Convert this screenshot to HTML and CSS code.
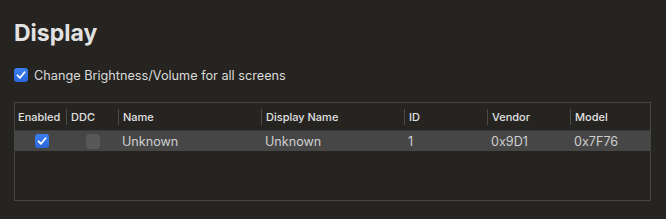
FILE: index.html
```html
<!DOCTYPE html>
<html lang="en">
<head>
    <meta charset="UTF-8">
    <title>Display</title>
    <link rel="stylesheet" href="styles.css">
</head>
<body>
    <div class="pane">
        <h1 class="title">Display</h1>

        <label class="option">
            <span class="check on">
                <svg viewBox="0 0 14 14"><path d="M3.5 7.3 L6 9.8 L10.6 4.2" /></svg>
            </span>
            Change Brightness/Volume for all screens
        </label>

        <div class="table-box">
            <div class="row head">
                <div class="cell c-enabled">Enabled</div>
                <div class="cell c-ddc">DDC</div>
                <div class="cell c-name">Name</div>
                <div class="cell c-dname">Display Name</div>
                <div class="cell c-id">ID</div>
                <div class="cell c-vendor">Vendor</div>
                <div class="cell c-model">Model</div>
            </div>
            <div class="row item selected">
                <div class="cell c-enabled center">
                    <span class="check on">
                        <svg viewBox="0 0 14 14"><path d="M3.5 7.3 L6 9.8 L10.6 4.2" /></svg>
                    </span>
                </div>
                <div class="cell c-ddc center"><span class="check off"></span></div>
                <div class="cell c-name">Unknown</div>
                <div class="cell c-dname">Unknown</div>
                <div class="cell c-id">1</div>
                <div class="cell c-vendor">0x9D1</div>
                <div class="cell c-model">0x7F76</div>
            </div>
        </div>
    </div>
</body>
</html>
```

FILE: styles.css
```css
body {
  margin: 0;
  padding: 0;
  background-color: #262420;
  font-family: "Inter", "Liberation Sans", sans-serif;
  color: #dcdcdc;
}

.pane {
  padding: 18px 15px 18px 14px;
}

.title {
  margin: 0;
  font-size: 23px;
  font-weight: 700;
  line-height: 30px;
  color: #e2e2e2;
}

.option {
  display: flex;
  align-items: center;
  gap: 6px;
  margin-top: 19px;
  font-size: 12.7px;
  color: #dadada;
  height: 16px;
}

/* checkboxes */

.check {
  display: inline-flex;
  width: 14px;
  height: 14px;
  border-radius: 3px;
  box-sizing: border-box;
  flex: none;
}

.check.on {
  background: linear-gradient(#3d7ff0, #2b66d9);
}

.check.on svg {
  width: 14px;
  height: 14px;
}

.check.on path {
  fill: none;
  stroke: #fff;
  stroke-width: 1.8;
  stroke-linecap: round;
  stroke-linejoin: round;
}

.check.off {
  height: 15px;
  background-color: #585858;
  border-radius: 4px;
}

/* table */

.table-box {
  margin-top: 19px;
  border: 1px solid #454542;
  height: 97px;
}

.row {
  display: flex;
}

.row.head {
  height: 27px;
  align-items: center;
  border-bottom: 1px solid #3a3936;
  font-size: 11px;
  font-weight: 500;
  color: #e0e0e0;
}

.row.item {
  height: 20px;
  align-items: center;
  font-size: 12.6px;
  color: #cfcfcf;
}

.row.selected {
  background-color: #464646;
}

.cell {
  box-sizing: border-box;
  padding-left: 4px;
  white-space: nowrap;
}

.head .cell {
  line-height: 16px;
}

.head .cell + .cell {
  border-left: 1px solid #4c4b48;
}

.head .c-enabled {
  padding-left: 3px;
}

.center {
  display: flex;
  justify-content: center;
  padding-left: 0;
}

.c-enabled { width: 51px; }
.c-ddc { width: 52px; }
.c-name { width: 143px; }
.c-dname { width: 143px; }
.c-id { width: 83px; }
.c-vendor { width: 83px; }
.c-model { flex: 1; }

.item .c-enabled { padding-left: 2px; }
.item .c-ddc { padding-left: 2px; }
```
